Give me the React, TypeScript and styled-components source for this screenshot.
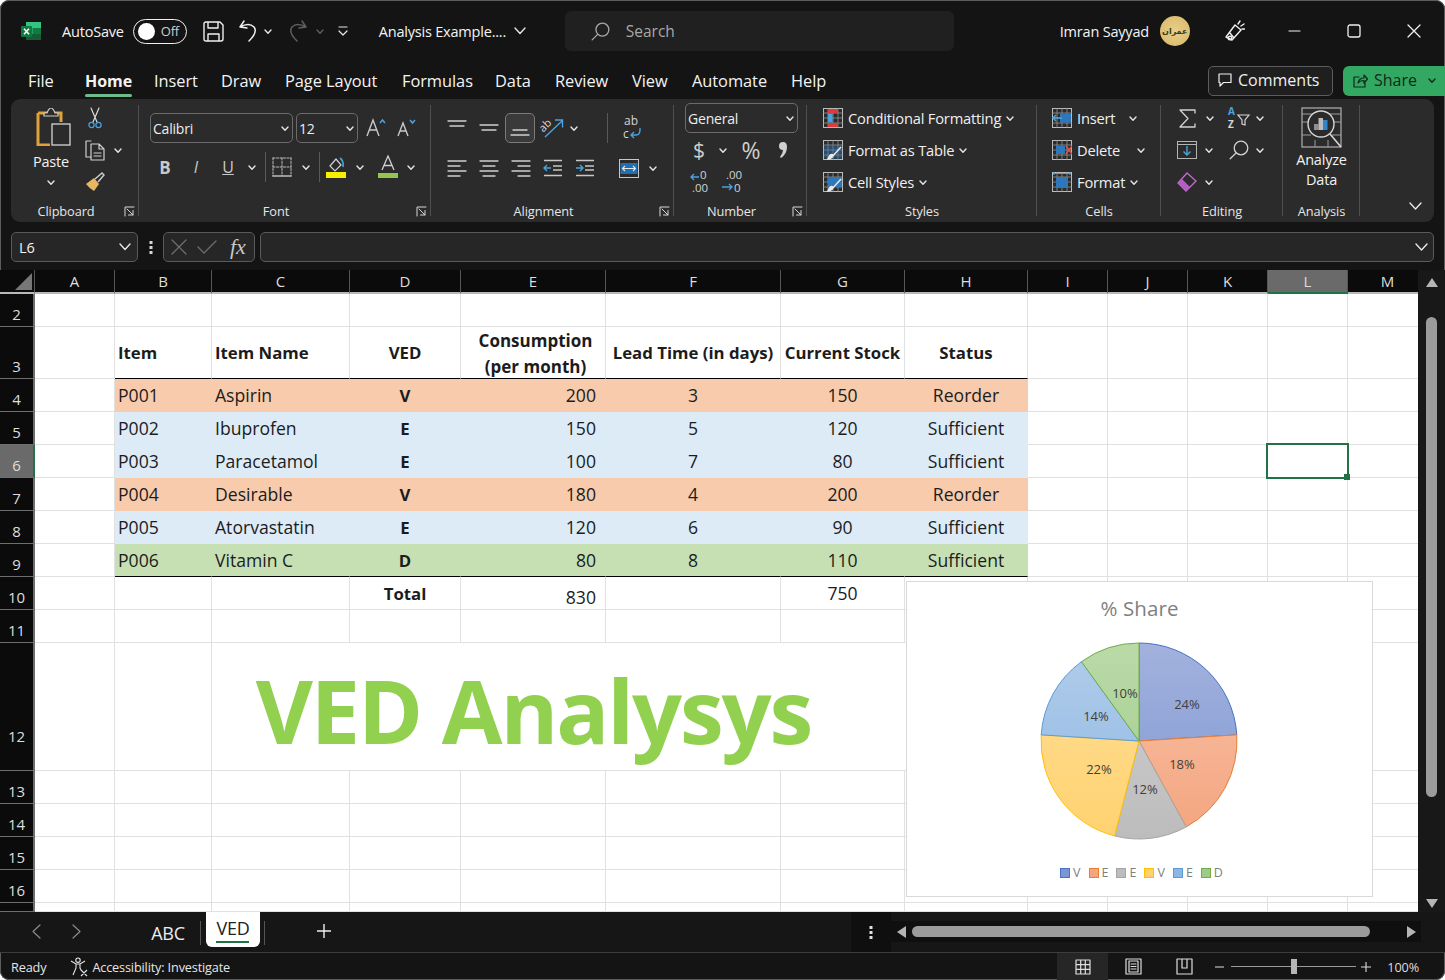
import React from "react";
import styled, { createGlobalStyle } from "styled-components";

const UI = `"Open Sans", "Noto Sans", "Liberation Sans", sans-serif`;

const Global = createGlobalStyle`
  html, body { margin: 0; padding: 0; background: #fff; }
  #root { width: 1445px; height: 980px; }
  * { box-sizing: border-box; }
`;

const Frame = styled.div`
  width: 1445px; height: 980px; background: #141414; color: #f2f2f2;
  font-family: ${UI}; font-size: 14px; display: flex; flex-direction: column;
  border-radius: 9px; overflow: hidden; position: relative;
  box-shadow: inset 0 0 0 1px #5c5c5c;
`;

/* ---------- generic small drawing helpers ---------- */
const Ic: React.FC<{ w: number; h?: number; vb?: string; sw?: number; c?: string; children: React.ReactNode }> = ({ w, h, vb, sw = 1.2, c = "currentColor", children }) => (
  <svg width={w} height={h ?? w} viewBox={vb ?? `0 0 ${w} ${h ?? w}`} fill="none" stroke={c} strokeWidth={sw} strokeLinecap="round" strokeLinejoin="round" style={{ flex: "none", display: "block" }}>
    {children}
  </svg>
);
const Chev: React.FC<{ s?: number; c?: string }> = ({ s = 9, c = "#e6e6e6" }) => (
  <Ic w={s} h={Math.ceil(s * 0.6)} sw={1.4} c={c}><path d={`M1 1 L${s / 2} ${s * 0.55 - 0.2} L${s - 1} 1`} /></Ic>
);

const BLUE = "#4aa3df";
const GR = "#c9c9c9";

/* ---------- title bar ---------- */
const TitleBar = styled.div`
  height: 62px; flex: none; display: flex; align-items: center; padding: 0 0 0 21px; position: relative;
`;
const Spot = styled.div<{ $ml?: number }>`
  margin-left: ${(p) => p.$ml ?? 0}px; display: flex; align-items: center; flex: none;
`;
const TitleText = styled.span<{ $ml?: number; $w?: number }>`
  margin-left: ${(p) => p.$ml ?? 0}px; font-size: 14.5px; white-space: nowrap; letter-spacing: -0.2px; color: #f4f4f4; flex: none;
  ${(p) => (p.$w ? `width:${p.$w}px;` : "")}
`;
const Toggle = styled.div`
  margin-left: 9px; width: 54px; height: 25px; border: 1px solid #f0f0f0; border-radius: 13px; display: flex; align-items: center;
  padding-left: 4px; gap: 6px; font-size: 13px; letter-spacing: -0.2px; color: #cfcfcf; flex: none;
`;
const Knob = styled.span`
  width: 17px; height: 17px; border-radius: 50%; background: #fff; flex: none;
`;
const SearchBox = styled.div`
  margin-left: 39px; width: 389px; height: 40px; background: #202020; border-radius: 6px; display: flex; align-items: center;
  padding-left: 26px; gap: 16px; color: #a8a8a8; font-size: 15.5px; flex: none;
`;
const Avatar = styled.div`
  margin-left: 11px; width: 30px; height: 30px; border-radius: 50%; background: radial-gradient(circle, #e9cf8b, #d8b767);
  color: #33401f; display: flex; align-items: center; justify-content: center; font: 700 8px "DejaVu Sans", sans-serif; flex: none; overflow: hidden;
`;

/* ---------- tab row ---------- */
const TabRow = styled.div`
  height: 37px; flex: none; display: flex; align-items: flex-start; padding-left: 28px; padding-top: 4px;
`;
const Tab = styled.div<{ $on?: boolean; $w: number }>`
  width: ${(p) => p.$w}px; flex: none; height: 30px; font-size: 16.4px; line-height: 30px; position: relative; white-space: nowrap; letter-spacing: -0.05px;
  font-weight: ${(p) => (p.$on ? 700 : 400)}; color: #f3f3f3;
  ${(p) => p.$on && `font-size:16px;&::after{content:"";position:absolute;left:0;width:47px;bottom:-1px;height:3px;border-radius:2px;background:#6dbb8a;}`}
`;
const TabActions = styled.div`
  margin-left: auto; display: flex; gap: 10px; align-items: center;
`;
const CommentsBtn = styled.div`
  width: 125px; height: 30px; border: 1px solid #5c5c5c; border-radius: 5px; display: flex; align-items: center; padding: 0 0 2px 9px; gap: 6px;
  font-size: 16px; background: #1f1f1f; color: #f0f0f0;
`;
const ShareBtn = styled.div`
  width: 102px; height: 30px; border-radius: 6px 0 0 6px; background: #33a862; color: #10291a; display: flex; align-items: center; padding: 0 0 2px 10px; gap: 6px; font-size: 16px;
`;

/* ---------- ribbon ---------- */
const Ribbon = styled.div`
  flex: none; margin: 0 11px; height: 123px; background: #2b2b2b; border-radius: 9px; display: flex; position: relative;
`;
const Group = styled.div<{ $w: number; $sep?: boolean }>`
  width: ${(p) => p.$w}px; flex: none; position: relative; display: flex; flex-direction: column; height: 100%;
  ${(p) => p.$sep !== false && `&::after{content:"";position:absolute;right:0;top:6px;bottom:6px;width:1px;background:#4f4f4f;}`}
`;
const GroupBody = styled.div<{ $pt?: number; $pl?: number; $gap?: number; $row?: boolean }>`
  flex: 1; min-height: 0; display: flex; flex-direction: ${(p) => (p.$row ? "row" : "column")}; padding-top: ${(p) => p.$pt ?? 0}px;
  padding-left: ${(p) => p.$pl ?? 0}px; gap: ${(p) => p.$gap ?? 0}px;
`;
const GroupFoot = styled.div`
  height: 24px; flex: none; display: flex; align-items: center; padding-top: 2px; font-size: 12.8px; letter-spacing: -0.1px; color: #e6e6e6;
`;
const FootLabel = styled.span`
  flex: 1; text-align: center;
`;
const Launcher = styled.span`
  width: 18px; flex: none; display: flex; justify-content: flex-end; padding-right: 4px;
`;
const BtnRow = styled.div<{ $h: number }>`
  height: ${(p) => p.$h}px; flex: none; display: flex; align-items: center;
`;
const Slot = styled.div<{ $w: number; $on?: boolean; $ml?: number }>`
  width: ${(p) => p.$w}px; height: 30px; flex: none; display: flex; align-items: center; justify-content: center;
  margin-left: ${(p) => p.$ml ?? 0}px;
  ${(p) => p.$on && `border:1px solid #7a7a7a;border-radius:5px;background:#3a3a3a;`}
`;
const VBar = styled.div<{ $w?: number }>`
  width: 1px; height: 30px; background: #5a5a5a; flex: none; margin: 0 ${(p) => p.$w ?? 0}px;
`;
const Combo = styled.div<{ $w: number; $ml?: number }>`
  width: ${(p) => p.$w}px; margin-left: ${(p) => p.$ml ?? 0}px; height: 30px; border: 1px solid #6b6b6b; border-radius: 5px; display: flex; align-items: center;
  justify-content: space-between; padding: 0 3px 0 2px; font-size: 14px; letter-spacing: -0.2px; color: #ededed; flex: none;
`;
const ListBtn = styled.div<{ $w?: number }>`
  display: flex; align-items: center; gap: 5px; font-size: 14.7px; letter-spacing: -0.2px; white-space: nowrap; color: #efefef;
  ${(p) => (p.$w ? `width:${p.$w}px;` : "")}
`;
const Push = styled.span`
  margin-left: auto; display: flex;
`;
const PasteCol = styled.div`
  width: 80px; flex: none; display: flex; flex-direction: column; align-items: center; padding-top: 9px; font-size: 14.5px;
`;
const PasteArt = styled.div`
  margin-left: 6px; flex: none;
`;
const PasteLabel = styled.span`
  margin-top: 6px; line-height: 20px; letter-spacing: -0.2px;
`;
const PasteChev = styled.span`
  margin-top: 8px; display: flex;
`;
const ClipCol = styled.div`
  display: flex; flex-direction: column; padding-top: 3px; margin-left: -6px;
`;
const ClipRow = styled.div`
  height: 32px; width: 48px; display: flex; align-items: center; gap: 9px;
`;
const ClipIcon = styled.div`
  width: 20px; flex: none; display: flex; justify-content: center;
`;
const AnalyzeCol = styled.div`
  flex: 1; display: flex; flex-direction: column; align-items: center; padding-top: 8px; font-size: 14.5px; line-height: 20px; letter-spacing: -0.2px; text-align: center;
`;
const AnalyzeText = styled.div`
  margin-top: 2px;
`;
const Collapse = styled.div`
  position: absolute; right: 12px; bottom: 12px; display: flex;
`;
const Glyph = styled.span<{ $s: number; $b?: boolean; $i?: boolean; $u?: boolean; $c?: string }>`
  font-size: ${(p) => p.$s}px; font-weight: ${(p) => (p.$b ? 700 : 400)}; font-style: ${(p) => (p.$i ? "italic" : "normal")};
  ${(p) => p.$u && "text-decoration: underline;"} color: ${(p) => p.$c ?? "#c9c9c9"}; line-height: 1; font-family: ${UI};
`;

/* ---------- formula bar ---------- */
const FormulaBar = styled.div`
  height: 48px; flex: none; display: flex; align-items: flex-start; padding: 10px 11px 0; gap: 0;
`;
const NameBox = styled.div`
  width: 127px; height: 30px; background: #262626; border: 1px solid #5a5a5a; border-radius: 5px; display: flex; align-items: center; justify-content: space-between;
  padding: 0 6px 0 7px; font-size: 14.5px; flex: none;
`;
const Dots = styled.div`
  width: 25px; height: 30px; flex: none; display: flex; align-items: center; justify-content: center;
`;
const FxBox = styled.div`
  width: 92px; height: 30px; border: 1px solid #5a5a5a; border-radius: 5px; background: #262626; display: flex; align-items: center; padding-left: 7px; gap: 10px; flex: none; color: #6e6e6e;
`;
const Fx = styled.span`
  font: italic 400 22px "Liberation Serif", serif; color: #c8c8c8; margin-left: 3px; line-height: 1;
`;
const FormulaInput = styled.div`
  flex: 1; margin-left: 5px; height: 30px; border: 1px solid #5a5a5a; border-radius: 5px; background: #262626; display: flex; align-items: center; justify-content: flex-end; padding-right: 5px;
`;

/* ---------- sheet ---------- */
const SheetWrap = styled.div`
  flex: none; height: 642px; display: flex; background: #181818;
`;
const Sheet = styled.div`
  width: 1418px; height: 642px; flex: none; position: relative; display: grid; overflow: hidden; background: #fff;
  grid-template-columns: 35px 80px 97px 138px 111px 145px 175px 124px 123px 80px 80px 80px 80px 80px;
  grid-template-rows: 24px 33px 52px repeat(8, 33px) 128px repeat(4, 33px) 9px;
  font-size: 17.6px; color: #1c1c1c;
`;
const ColHead = styled.div<{ $sel?: boolean }>`
  background: ${(p) => (p.$sel ? "#6a6a6a" : "#0b0b0b")}; color: #dedede; font-size: 15px; display: flex; align-items: center; justify-content: center;
  border-right: 1px solid #565656; border-bottom: 2px solid ${(p) => (p.$sel ? "#217346" : "#b9b9b9")};
`;
const Corner = styled.div`
  background: #0b0b0b; border-right: 1px solid #565656; border-bottom: 2px solid #b9b9b9; display: flex; align-items: flex-end; justify-content: flex-end; padding: 0 2px 2px 0;
`;
const RowHead = styled.div<{ $sel?: boolean; $lift?: number }>`
  background: ${(p) => (p.$sel ? "#6a6a6a" : "#0b0b0b")}; color: #dedede; font-size: 15px; display: flex; align-items: flex-end; justify-content: center; line-height: 20px;
  padding-bottom: ${(p) => p.$lift ?? 2}px;
  border-bottom: 1px solid #6e6e6e; border-right: 2px solid ${(p) => (p.$sel ? "#217346" : "#6e6e6e")};
`;
const Cell = styled.div<{ $fill?: string; $align?: "l" | "c" | "r"; $bold?: boolean; $under?: boolean; $low?: boolean; $head?: boolean; $span?: number }>`
  background: ${(p) => p.$fill ?? "#fff"}; display: flex; white-space: nowrap; min-width: 0;
  align-items: ${(p) => (p.$low ? "flex-end" : "center")};
  justify-content: ${(p) => (p.$align === "r" ? "flex-end" : p.$align === "c" ? "center" : "flex-start")};
  padding-left: ${(p) => (p.$align === "r" || p.$align === "c" ? 0 : 3)}px;
  padding-right: ${(p) => (p.$align === "r" ? 9 : 0)}px;
  padding-bottom: 0;
  font-weight: ${(p) => (p.$bold ? 700 : 400)};
  ${(p) => p.$bold && "font-size: 16.8px;"}
  border-right: 1px solid ${(p) => p.$fill ?? "#e1e1e1"};
  border-bottom: 1px solid ${(p) => (p.$under ? "#000" : p.$fill ?? "#e1e1e1")};
  ${(p) => p.$span && `grid-column: span ${p.$span};`}
`;
const HeadText = styled.div`
  text-align: center; line-height: 26px; font-weight: 700; font-size: 17px; padding: 2px 0 0 5px;
`;
const BigTitle = styled.div`
  font-weight: 700; font-size: 88px; color: #92d050; padding-right: 172px; letter-spacing: -2.1px; line-height: 1; transform: translateY(3px);
`;
const Selection = styled.div`
  position: absolute; left: 1266px; top: 173px; width: 83px; height: 36px; border: 2px solid #217346; pointer-events: none;
  &::after { content: ""; position: absolute; right: -3px; bottom: -3px; width: 6px; height: 6px; background: #217346; border: 0 solid #fff; }
`;
const Chart = styled.div`
  position: absolute; left: 906px; top: 311px; width: 467px; height: 316px; background: #fff; border: 1px solid #d9d9d9; display: flex; flex-direction: column; align-items: center;
`;
const ChartTitle = styled.div`
  margin-top: 12px; height: 28px; line-height: 28px; font-size: 20.5px; color: #7f7f7f; letter-spacing: .1px;
`;
const PieBox = styled.div`
  margin-top: 19px; width: 200px; height: 200px; flex: none; transform: translateX(-1px);
`;
const Legend = styled.div`
  margin-top: 23px; display: flex; gap: 8px; font-size: 12.5px; color: #7f7f7f; transform: translateX(2px);
`;
const LegendItem = styled.div`
  display: flex; align-items: center; gap: 3px;
`;
const Swatch = styled.span<{ $c: string; $b: string }>`
  width: 10px; height: 10px; background: ${(p) => p.$c}; border: 1px solid ${(p) => p.$b}; flex: none;
`;
const VScroll = styled.div`
  width: 27px; flex: none; position: relative; display: flex; flex-direction: column; align-items: center;
`;
const VThumb = styled.div`
  margin-top: 17px; width: 11px; height: 480px; border-radius: 6px; background: #9b9b9b; flex: none;
`;
const VUp = styled.div`
  height: 30px; padding-top: 8px; flex: none; display: flex;
`;
const VDown = styled.div`
  margin-top: auto; padding-bottom: 4px; display: flex;
`;

/* ---------- sheet tabs ---------- */
const SheetBar = styled.div`
  height: 40px; flex: none; background: #161616; display: flex; align-items: stretch; padding-left: 32px; position: relative;
`;
const NavArrow = styled.div<{ $ml?: number }>`
  margin-left: ${(p) => p.$ml ?? 0}px; display: flex; align-items: center; width: 10px; flex: none; padding-bottom: 2px;
`;
const SheetTab = styled.div`
  margin-left: 56px; width: 60px; text-align: center; font-size: 18px; line-height: 42px; letter-spacing: -0.3px; color: #ececec; flex: none;
`;
const TabSep = styled.div<{ $ml?: number }>`
  width: 1px; height: 24px; margin: 9px 0 0 ${(p) => p.$ml ?? 0}px; background: #555; flex: none;
`;
const ActiveTab = styled.div`
  margin-left: 5px; width: 54px; height: 35px; background: #fff; color: #222; border-radius: 0 0 6px 6px; text-align: center; font-size: 18px; line-height: 32px; letter-spacing: -0.3px; position: relative; flex: none;
  &::after { content: ""; position: absolute; left: 10px; right: 11px; bottom: 4px; height: 2px; background: #1e7145; }
`;
const PlusBtn = styled.div`
  margin-left: 52px; display: flex; align-items: center; flex: none; padding-bottom: 2px;
`;
const Kebab = styled.div`
  margin-left: auto; width: 40px; background: #0f0f0f; display: flex; align-items: center; justify-content: center; flex: none;
`;
const HScroll = styled.div`
  width: 530px; height: 21px; flex: none; background: #0f0f0f; margin: 9px 24px 0 0; display: flex; align-items: center; padding-left: 6px;
`;
const HThumb = styled.div`
  margin-left: 6px; width: 458px; height: 11px; border-radius: 6px; background: #9b9b9b; flex: none;
`;
const HRight = styled.div`
  margin-left: 37px; display: flex;
`;

/* ---------- status bar ---------- */
const StatusBar = styled.div`
  height: 28px; flex: none; border-top: 1px solid #3d3d3d; display: flex; align-items: center; padding-left: 11px; font-size: 12.7px; color: #e6e6e6; letter-spacing: -0.15px; white-space: nowrap;
`;
const StatusA11y = styled.div`
  margin-left: 24px; display: flex; align-items: center; gap: 4px; white-space: nowrap;
`;
const ViewBtn = styled.div<{ $on?: boolean; $auto?: boolean }>`
  width: 51px; height: 27px; flex: none; display: flex; align-items: center; justify-content: center; ${(p) => p.$auto && "margin-left: auto;"}
  background: ${(p) => (p.$on ? "#262626" : "transparent")};
`;
const Zoomer = styled.div`
  display: flex; align-items: center; margin-left: 5px; flex: none; color: #dedede;
`;
const Track = styled.div`
  width: 125px; height: 1px; background: #9a9a9a; margin: 0 5px 0 7px; position: relative;
  &::after { content: ""; position: absolute; left: 60px; top: -7px; width: 6px; height: 15px; background: #b5b5b5; }
`;
const ZoomPct = styled.span`
  width: 32px; margin: 0 26px 0 16px; text-align: right; white-space: nowrap;
`;

/* ---------- icons ---------- */
const ExcelLogo = () => (
  <svg width="20" height="20" viewBox="0 0 20 20" style={{ display: "block", flex: "none" }}>
    <rect x="5" y="1" width="15" height="18" rx="1.5" fill="#21a366" />
    <rect x="5" y="1" width="15" height="6" fill="#33c481" />
    <rect x="12" y="7" width="8" height="6" fill="#107c41" />
    <rect x="5" y="13" width="15" height="6" fill="#185c37" />
    <rect x="0" y="5" width="11" height="11" rx="1" fill="#0f7a40" />
    <path d="M3 7.8 L8 13.2 M8 7.8 L3 13.2" stroke="#fff" strokeWidth="1.6" />
  </svg>
);
const SaveIc = () => (
  <Ic w={21} sw={1.4} c="#f0f0f0"><path d="M1 3 Q1 1 3 1 H17 L20 4 V18 Q20 20 18 20 H3 Q1 20 1 18 Z M5 1 V7 H15 V1 M5 20 V13 H16 V20" /></Ic>
);
const UndoIc = ({ c = "#f0f0f0" }) => (
  <Ic w={20} h={22} sw={1.5} c={c}><path d="M6 1 L2 7 L9 8 M2 7 Q11 2 16 7 Q20 12 11 21" /></Ic>
);
const RedoIc = () => (
  <Ic w={20} h={22} sw={1.5} c="#5f5f5f"><path d="M14 1 L18 7 L11 8 M18 7 Q9 2 4 7 Q0 12 9 21" /></Ic>
);
const QatIc = () => (
  <Ic w={10} h={11} sw={1.2} c="#e6e6e6"><path d="M1 1 H9 M1 5 L5 9 L9 5" /></Ic>
);
const SearchIc = ({ s = 19, c = "#a8a8a8" }) => (
  <Ic w={s} sw={1.3} c={c}><circle cx={s * 0.6} cy={s * 0.4} r={s * 0.34} /><path d={`M${s * 0.35} ${s * 0.65} L${s * 0.06} ${s * 0.94}`} /></Ic>
);
const PenIc = () => (
  <Ic w={20} h={22} sw={1.4} c="#f0f0f0"><path d="M10 5 L16 10 L7 20 L1 17 Z M5 13 L9 18 M13 4 L15 1 M16 6 L19 4 M17 9 L20 9" /><circle cx="5" cy="18" r="1.8" /></Ic>
);
const PasteIc = () => (
  <svg width="36" height="38" viewBox="0 0 36 38" fill="none" style={{ display: "block" }}>
    <path d="M2 5 H25 V14 M2 5 V37 H14" stroke="#dfa23a" strokeWidth="3" />
    <path d="M8 5 H11 Q13 0 15 0 Q17 0 19 5 H22 V8 H8 Z" stroke="#cfcfcf" strokeWidth="1.2" fill="#2b2b2b" />
    <rect x="16" y="16" width="18" height="21" stroke="#d4d4d4" strokeWidth="1.3" fill="#2b2b2b" />
  </svg>
);
const ScissorsIc = () => (
  <Ic w={14} h={22} sw={1.2} c="#dcdcdc"><path d="M3 1 L9 15 M11 1 L5 15" /><circle cx="3.5" cy="18" r="2.6" stroke={BLUE} /><circle cx="10.5" cy="18" r="2.6" stroke={BLUE} /></Ic>
);
const CopyIc = () => (
  <Ic w={20} h={21} sw={1.2} c="#cfcfcf"><path d="M6 1 H1 V17 H6" /><path d="M6 4 H14 L19 9 V20 H6 Z M14 4 V9 H19 M9 13 H16 M9 16 H16" /></Ic>
);
const BrushIc = () => (
  <svg width="20" height="20" viewBox="0 0 20 20" fill="none" style={{ display: "block" }}>
    <path d="M1 12 L9 6 L14 12 L9 19 Q5 17 1 12 Z" fill="#e7b863" />
    <path d="M10 7 L17 1 L19 3 L13 10" stroke="#cfcfcf" strokeWidth="1.4" />
  </svg>
);
const LauncherIc = () => (
  <Ic w={11} h={11} sw={1} c="#d8d8d8"><path d="M1 10 V1 H10 M3 3 L9 9 M9 4.5 V9 H4.5" /></Ic>
);
const GrowA = ({ up }: { up: boolean }) => (
  <svg width="20" height="20" viewBox="0 0 20 20" fill="none" style={{ display: "block" }}>
    <path d={up ? "M1 18 L7 2 L13 18 M3.5 12 H10.5" : "M2 18 L7 5 L12 18 M4 13 H10"} stroke={GR} strokeWidth="1.4" />
    <path d={up ? "M14 5 L16.5 2 L19 5" : "M14 2 L16.5 5 L19 2"} stroke={BLUE} strokeWidth="1.5" />
  </svg>
);
const BordersIc = () => (
  <Ic w={20} h={20} sw={1} c="#bdbdbd"><path d="M1 1 H19 M1 10 H19 M10 1 V19 M1 1 V19 M19 1 V19" strokeDasharray="2 1.5" /><path d="M1 19 H19" strokeWidth="1.6" /></Ic>
);
const FillIc = () => (
  <svg width="20" height="24" viewBox="0 0 20 24" fill="none" style={{ display: "block" }}>
    <path d="M4 11 L10 4 L15 10 L9 16 Z" stroke="#d0d0d0" strokeWidth="1.2" />
    <path d="M14 3 Q18 6 17 12" stroke={BLUE} strokeWidth="1.6" />
    <rect x="0" y="17" width="20" height="6" fill="#f8ee00" />
  </svg>
);
const FontColorIc = () => (
  <svg width="20" height="24" viewBox="0 0 20 24" fill="none" style={{ display: "block" }}>
    <path d="M4 15 L10 1 L16 15 M6 10.5 H14" stroke="#d0d0d0" strokeWidth="1.3" />
    <rect x="0" y="18" width="20" height="5" fill="#92c64f" />
  </svg>
);
const Lines: React.FC<{ rows: [number, number][]; y0: number; dy: number; w?: number; h?: number }> = ({ rows, y0, dy, w = 20, h = 20 }) => (
  <Ic w={w} h={h} sw={1.3} c="#d0d0d0">
    <path d={rows.map(([a, b], i) => `M${a} ${y0 + i * dy} H${b}`).join(" ")} />
  </Ic>
);
const IndentIc = ({ out }: { out: boolean }) => (
  <svg width="20" height="18" viewBox="0 0 20 18" fill="none" style={{ display: "block" }}>
    <path d="M1 1.5 H19 M10 7 H19 M10 11 H19 M1 16.5 H19" stroke="#c8c8c8" strokeWidth="1.3" />
    <path d={out ? "M8 9 H1 M4 6 L1 9 L4 12" : "M1 9 H8 M5 6 L8 9 L5 12"} stroke={BLUE} strokeWidth="1.4" />
  </svg>
);
const OrientIc = () => (
  <svg width="22" height="20" viewBox="0 0 22 20" fill="none" style={{ display: "block", overflow: "visible" }}>
    <path d="M3 19 L20 3 M13 2 H20.5 V9.5" stroke={BLUE} strokeWidth="1.4" />
    <text x="-2" y="11" fontSize="11" fill="#d6d6d6" transform="rotate(-45 4 9)" fontFamily="Open Sans">ab</text>
  </svg>
);
const WrapIc = () => (
  <svg width="20" height="24" viewBox="0 0 20 24" fill="none" style={{ display: "block", overflow: "visible" }}>
    <text x="3" y="9" fontSize="12" fill="#d4d4d4" fontFamily="Open Sans">ab</text>
    <text x="2" y="22" fontSize="12" fill="#d4d4d4" fontFamily="Open Sans">c</text>
    <path d="M19 12 V14 Q19 19 15 19 H10 M13 16 L10 19 L13 22" stroke={BLUE} strokeWidth="1.4" />
  </svg>
);
const MergeIc = () => (
  <svg width="20" height="19" viewBox="0 0 20 19" fill="none" style={{ display: "block" }}>
    <rect x="0.5" y="0.5" width="19" height="18" stroke="#c8c8c8" />
    <rect x="1.5" y="4" width="17" height="11" fill="#1f6fb5" />
    <path d="M4 9.5 H16 M6 7 L3.5 9.5 L6 12 M14 7 L16.5 9.5 L14 12" stroke="#e6e6e6" strokeWidth="1.1" />
  </svg>
);
const DecIc = ({ inc }: { inc: boolean }) => (
  <svg width="20" height="22" viewBox="0 0 20 22" fill="none" style={{ display: "block", overflow: "visible" }}>
    <text x={inc ? 4 : 10} y="8" fontSize="11.5" fill="#d4d4d4" fontFamily="Open Sans">{inc ? ".00" : "0"}</text>
    <text x={inc ? 12 : 2} y="21" fontSize="11.5" fill="#d4d4d4" fontFamily="Open Sans">{inc ? "0" : ".00"}</text>
    <path d={inc ? "M0 16 H10 M7 13 L10 16 L7 19" : "M1 6 H9 M4 3 L1 6 L4 9"} stroke={BLUE} strokeWidth="1.3" />
  </svg>
);
const CommaIc = () => (
  <svg width="10" height="16" viewBox="0 0 10 16" style={{ display: "block" }}>
    <path d="M1 4 Q1 0 5 0 Q9 0 9 5 Q9 12 3 16 L2 15 Q5 11 5 8 Q1 8 1 4 Z" fill="#cfcfcf" />
  </svg>
);
const TableBase: React.FC<{ children?: React.ReactNode }> = ({ children }) => (
  <svg width="20" height="20" viewBox="0 0 20 20" fill="none" style={{ display: "block", flex: "none" }}>
    <rect x="0.5" y="0.5" width="19" height="19" stroke="#bdbdbd" />
    <path d="M0.5 5 H19.5 M0.5 10 H19.5 M0.5 15 H19.5 M5 0.5 V19.5 M10 0.5 V19.5 M15 0.5 V19.5" stroke="#8a8a8a" strokeWidth=".9" />
    {children}
  </svg>
);
const CondIc = () => <TableBase><rect x="5" y="1" width="10" height="4" fill="#e03b3b" /><rect x="5" y="5.5" width="4.6" height="9" fill="#4aa3df" /><rect x="5" y="15" width="10" height="4" fill="#e03b3b" /></TableBase>;
const BrushMini = () => <path d="M8 18 L18 7 M5 19 Q7 13 10 15 Q10 18 5 19 Z" stroke="#e9e9e9" strokeWidth="1.5" fill="#e9e9e9" />;
const FmtTableIc = () => <TableBase><rect x="1" y="5.5" width="18" height="13" fill="#2d77bb" opacity=".45" /><BrushMini /></TableBase>;
const CellStyleIc = () => <TableBase><rect x="5" y="5" width="14" height="10" fill="#2d77bb" /><BrushMini /></TableBase>;
const InsertIc = () => <TableBase><rect x="8" y="5.5" width="11" height="9" fill="#2d77bb" /><path d="M10 10 H1 M4 7 L1 10 L4 13" stroke={BLUE} strokeWidth="1.5" /></TableBase>;
const DeleteIc = () => <TableBase><rect x="4" y="6" width="9" height="8" fill="#2d77bb" /><path d="M14 6 L20 14 M20 6 L14 14" stroke="#e5534b" strokeWidth="1.5" /></TableBase>;
const FormatIc = () => <TableBase><rect x="4" y="5" width="12" height="11" fill="#2d77bb" /><path d="M1 1.5 H19 M2 0 V3 M18 0 V3" stroke={BLUE} strokeWidth="1.1" /></TableBase>;
const SigmaIc = () => <Ic w={17} h={19} sw={1.3} c="#d2d2d2"><path d="M16 4 V1 H1 L9 9.5 L1 18 H16 V15" /></Ic>;
const SortIc = () => (
  <svg width="22" height="20" viewBox="0 0 22 20" fill="none" style={{ display: "block", overflow: "visible" }}>
    <text x="0" y="7" fontSize="10" fontWeight="700" fill={BLUE} fontFamily="Open Sans">A</text>
    <text x="0" y="20" fontSize="10" fontWeight="700" fill="#d6d6d6" fontFamily="Open Sans">Z</text>
    <path d="M10 7 H21 L17 12 V17 L14 16 V12 Z" stroke="#d6d6d6" strokeWidth="1.2" />
  </svg>
);
const FillDownIc = () => (
  <svg width="20" height="18" viewBox="0 0 20 18" fill="none" style={{ display: "block" }}>
    <rect x="0.5" y="0.5" width="19" height="17" stroke="#b5b5b5" />
    <path d="M0.5 3.5 H19.5" stroke="#b5b5b5" />
    <path d="M10 5 V14 M6.5 10.5 L10 14 L13.5 10.5" stroke={BLUE} strokeWidth="1.4" />
  </svg>
);
const EraserIc = () => (
  <svg width="20" height="20" viewBox="0 0 20 20" fill="none" style={{ display: "block" }}>
    <path d="M10 1 L19 9 L9 19 L1 11 Z" stroke="#c46cd0" strokeWidth="1.3" />
    <path d="M5 7 L13 15 L9 19 L1 11 Z" fill="#b45ec4" />
  </svg>
);
const AnalyzeIc = () => (
  <svg width="41" height="41" viewBox="0 0 41 41" fill="none" style={{ display: "block" }}>
    <rect x="1" y="1" width="39" height="39" stroke="#b0b0b0" strokeWidth="1.2" />
    <path d="M1 7 H40 M1 15 H8 M33 15 H40 M1 28 H10 M31 28 H40 M14 33 V40 M27 33 V40" stroke="#9d9d9d" />
    <circle cx="20" cy="17" r="13" fill="#2b2b2b" stroke="#d6d6d6" strokeWidth="1.4" />
    <rect x="13" y="17" width="4.5" height="6" fill="#8f8f8f" />
    <rect x="17.5" y="11" width="4.5" height="12" fill="#bcbcbc" />
    <rect x="22" y="13" width="4.5" height="10" fill="#2f86cf" />
    <path d="M29 27 L40 40" stroke="#d6d6d6" strokeWidth="1.6" />
  </svg>
);
const CommentIc = () => <Ic w={14} h={14} sw={1.2} c="#f0f0f0"><path d="M1 1 H13 V9.5 H5.5 L2 13 V9.5 H1 Z" /></Ic>;
const ShareIc = () => (
  <Ic w={15} h={15} sw={1.2} c="#10291a"><path d="M6 4 H1 V14 H12 V10 M5 10 Q6 5 11 5 V2 L14.5 6 L11 10 V7.5 Q7 7.5 5 10 Z" /></Ic>
);
const A11yIc = () => (
  <svg width="18" height="20" viewBox="0 0 18 20" fill="none" stroke="#e6e6e6" strokeWidth="1.1" style={{ display: "block", flex: "none" }}>
    <circle cx="8" cy="3.2" r="2.2" />
    <path d="M1 4 L6 7 H10 L15 4 M6 7 V11 L3 18 M10 7 V11 L11 13 M11 13 L17 19 M17 13 L11 19" />
  </svg>
);

/* ---------- data ---------- */
const COLS = ["A", "B", "C", "D", "E", "F", "G", "H", "I", "J", "K", "L", "M"];
const ORANGE = "#f8cbad", SKY = "#ddebf7", LEAF = "#c6e0b4";
const ROWS = [
  { id: "P001", name: "Aspirin", ved: "V", cons: 200, lead: 3, stock: 150, status: "Reorder", fill: ORANGE },
  { id: "P002", name: "Ibuprofen", ved: "E", cons: 150, lead: 5, stock: 120, status: "Sufficient", fill: SKY },
  { id: "P003", name: "Paracetamol", ved: "E", cons: 100, lead: 7, stock: 80, status: "Sufficient", fill: SKY },
  { id: "P004", name: "Desirable", ved: "V", cons: 180, lead: 4, stock: 200, status: "Reorder", fill: ORANGE },
  { id: "P005", name: "Atorvastatin", ved: "E", cons: 120, lead: 6, stock: 90, status: "Sufficient", fill: SKY },
  { id: "P006", name: "Vitamin C", ved: "D", cons: 80, lead: 8, stock: 110, status: "Sufficient", fill: LEAF },
];
const Blanks: React.FC<{ n: number }> = ({ n }) => <>{Array.from({ length: n }, (_, i) => <Cell key={i} />)}</>;

const SLICES = [
  { pct: 24, top: "#a3b2de", bot: "#7d96d2", line: "#4472c4", key: "V", lx: 148, ly: 65 },
  { pct: 18, top: "#f7c3a9", bot: "#f4a47e", line: "#ed7d31", key: "E", lx: 143, ly: 125 },
  { pct: 12, top: "#d2d2d2", bot: "#bcbcbc", line: "#a5a5a5", key: "E", lx: 106, ly: 150 },
  { pct: 22, top: "#ffdf9b", bot: "#ffd26f", line: "#ffc000", key: "V", lx: 60, ly: 130 },
  { pct: 14, top: "#b2cdea", bot: "#8db7e3", line: "#5b9bd5", key: "E", lx: 57, ly: 77 },
  { pct: 10, top: "#bbdaa9", bot: "#9fcb88", line: "#70ad47", key: "D", lx: 86, ly: 54 },
];
const Pie = () => {
  const R = 98, C = 100;
  let acc = 0;
  const pts = (a: number) => [C + R * Math.sin(a), C - R * Math.cos(a)];
  return (
    <svg width="200" height="200" viewBox="0 0 200 200" style={{ display: "block" }}>
      <defs>
        {SLICES.map((s, i) => (
          <linearGradient key={i} id={`sl${i}`} gradientUnits="userSpaceOnUse" x1="0" y1="0" x2="0" y2="200">
            <stop offset="0" stopColor={s.top} /><stop offset="1" stopColor={s.bot} />
          </linearGradient>
        ))}
      </defs>
      {SLICES.map((s, i) => {
        const a0 = (acc / 100) * 2 * Math.PI;
        acc += s.pct;
        const a1 = (acc / 100) * 2 * Math.PI;
        const [x0, y0] = pts(a0), [x1, y1] = pts(a1);
        return <path key={i} d={`M${C} ${C} L${x0} ${y0} A${R} ${R} 0 ${s.pct > 50 ? 1 : 0} 1 ${x1} ${y1} Z`} fill={`url(#sl${i})`} stroke={s.line} strokeWidth="1" strokeLinejoin="round" />;
      })}
      {SLICES.map((s, i) => (
        <text key={i} x={s.lx} y={s.ly} textAnchor="middle" dominantBaseline="middle" fontSize="13" fill="#404040" fontFamily="Open Sans">{s.pct}%</text>
      ))}
    </svg>
  );
};

export default function App() {
  const TABS: [string, number][] = [["File", 57], ["Home", 69], ["Insert", 67], ["Draw", 64], ["Page Layout", 117], ["Formulas", 93], ["Data", 60], ["Review", 77], ["View", 60], ["Automate", 99], ["Help", 60]];
  return (
    <Frame>
      <Global />
      <TitleBar>
        <ExcelLogo />
        <TitleText $ml={21}>AutoSave</TitleText>
        <Toggle><Knob />Off</Toggle>
        <Spot $ml={16}><SaveIc /></Spot>
        <Spot $ml={14}><UndoIc /></Spot>
        <Spot $ml={6}><Chev s={8} /></Spot>
        <Spot $ml={16}><RedoIc /></Spot>
        <Spot $ml={8}><Chev s={8} c="#5f5f5f" /></Spot>
        <Spot $ml={14}><QatIc /></Spot>
        <TitleText $ml={31} $w={128}>Analysis Example....</TitleText>
        <Spot $ml={7}><Chev s={12} /></Spot>
        <SearchBox><SearchIc />Search</SearchBox>
        <TitleText $ml={106} $w={89}>Imran Sayyad</TitleText>
        <Avatar>عمران</Avatar>
        <Spot $ml={35}><PenIc /></Spot>
        <Spot $ml={43}><Ic w={13} h={2} sw={1.2} c="#f0f0f0"><path d="M1 1 H12" /></Ic></Spot>
        <Spot $ml={46}><Ic w={14} sw={1.3} c="#f0f0f0"><rect x="1" y="1" width="12" height="12" rx="2" /></Ic></Spot>
        <Spot $ml={46}><Ic w={14} sw={1.3} c="#f0f0f0"><path d="M1 1 L13 13 M13 1 L1 13" /></Ic></Spot>
      </TitleBar>

      <TabRow>
        {TABS.map(([t, w]) => <Tab key={t} $w={w} $on={t === "Home"}>{t}</Tab>)}
        <TabActions>
          <CommentsBtn><CommentIc />Comments</CommentsBtn>
          <ShareBtn><ShareIc />Share<Push><Spot $ml={0}><span style={{ width: 17, display: "block" }}><Chev s={8} c="#10291a" /></span></Spot></Push></ShareBtn>
        </TabActions>
      </TabRow>

      <Ribbon>
        <Group $w={128}>
          <GroupBody $row>
            <PasteCol>
              <PasteArt><PasteIc /></PasteArt>
              <PasteLabel>Paste</PasteLabel>
              <PasteChev><Chev s={8} /></PasteChev>
            </PasteCol>
            <ClipCol>
              <ClipRow><ClipIcon><ScissorsIc /></ClipIcon></ClipRow>
              <ClipRow><ClipIcon><CopyIc /></ClipIcon><Chev s={8} /></ClipRow>
              <ClipRow><ClipIcon><BrushIc /></ClipIcon></ClipRow>
            </ClipCol>
          </GroupBody>
          <GroupFoot><FootLabel>Clipboard</FootLabel><Launcher><LauncherIc /></Launcher></GroupFoot>
        </Group>

        <Group $w={292}>
          <GroupBody $pt={14} $gap={9} $pl={11}>
            <BtnRow $h={30}>
              <Combo $w={143}>Calibri<Chev s={8} /></Combo>
              <Combo $w={62} $ml={3}>12<Chev s={8} /></Combo>
              <Slot $w={32} $ml={2}><GrowA up /></Slot>
              <Slot $w={28}><GrowA up={false} /></Slot>
            </BtnRow>
            <BtnRow $h={30}>
              <Slot $w={30}><Glyph $s={17} $b>B</Glyph></Slot>
              <Slot $w={32}><Glyph $s={16} $i>I</Glyph></Slot>
              <Slot $w={32}><Glyph $s={16} $u>U</Glyph></Slot>
              <Slot $w={16}><Chev s={8} /></Slot>
              <VBar $w={5} />
              <Slot $w={22}><BordersIc /></Slot>
              <Slot $w={26}><Chev s={8} /></Slot>
              <VBar />
              <Slot $w={32}><FillIc /></Slot>
              <Slot $w={16}><Chev s={8} /></Slot>
              <Slot $w={30} $ml={5}><FontColorIc /></Slot>
              <Slot $w={16}><Chev s={8} /></Slot>
            </BtnRow>
          </GroupBody>
          <GroupFoot><FootLabel>Font</FootLabel><Launcher><LauncherIc /></Launcher></GroupFoot>
        </Group>

        <Group $w={243}>
          <GroupBody $pt={14} $gap={10} $pl={10}>
            <BtnRow $h={30}>
              <Slot $w={32}><Lines rows={[[1, 19], [3, 17]]} y0={3} dy={5} /></Slot>
              <Slot $w={32}><Lines rows={[[1, 19], [3, 17]]} y0={7} dy={5} /></Slot>
              <Slot $w={30} $on><Lines rows={[[3, 17], [1, 19]]} y0={12} dy={5} /></Slot>
              <Slot $w={36}><OrientIc /></Slot>
              <Slot $w={6}><Chev s={8} /></Slot>
              <Slot $w={30} />
              <VBar />
              <Slot $w={46}><WrapIc /></Slot>
            </BtnRow>
            <BtnRow $h={30}>
              <Slot $w={32}><Lines rows={[[1, 19], [1, 13], [1, 19], [1, 13]]} y0={3} dy={5} /></Slot>
              <Slot $w={32}><Lines rows={[[1, 19], [4, 16], [1, 19], [4, 16]]} y0={3} dy={5} /></Slot>
              <Slot $w={32}><Lines rows={[[1, 19], [7, 19], [1, 19], [7, 19]]} y0={3} dy={5} /></Slot>
              <Slot $w={32}><IndentIc out /></Slot>
              <Slot $w={32}><IndentIc out={false} /></Slot>
              <Slot $w={12} />
              <Slot $w={32}><MergeIc /></Slot>
              <Slot $w={16}><Chev s={8} /></Slot>
            </BtnRow>
          </GroupBody>
          <GroupFoot><FootLabel>Alignment</FootLabel><Launcher><LauncherIc /></Launcher></GroupFoot>
        </Group>

        <Group $w={133}>
          <GroupBody $pt={4} $gap={2} $pl={11}>
            <BtnRow $h={30}><Combo $w={113}>General<Chev s={8} /></Combo></BtnRow>
            <BtnRow $h={30}>
              <Slot $w={28}><Glyph $s={21} $c="#cfcfcf">$</Glyph></Slot>
              <Slot $w={20}><Chev s={8} /></Slot>
              <Slot $w={36}><Glyph $s={23} $c="#cfcfcf">%</Glyph></Slot>
              <Slot $w={28}><CommaIc /></Slot>
            </BtnRow>
            <BtnRow $h={30}>
              <Slot $w={30}><DecIc inc={false} /></Slot>
              <Slot $w={34}><DecIc inc /></Slot>
            </BtnRow>
          </GroupBody>
          <GroupFoot><FootLabel>Number</FootLabel><Launcher><LauncherIc /></Launcher></GroupFoot>
        </Group>

        <Group $w={230}>
          <GroupBody $pt={3} $pl={16}>
            <BtnRow $h={32}><ListBtn><CondIc />Conditional Formatting<Chev s={8} /></ListBtn></BtnRow>
            <BtnRow $h={32}><ListBtn><FmtTableIc />Format as Table<Chev s={8} /></ListBtn></BtnRow>
            <BtnRow $h={32}><ListBtn><CellStyleIc />Cell Styles<Chev s={8} /></ListBtn></BtnRow>
          </GroupBody>
          <GroupFoot><FootLabel>Styles</FootLabel></GroupFoot>
        </Group>

        <Group $w={124}>
          <GroupBody $pt={3} $pl={15}>
            <BtnRow $h={32}><ListBtn $w={85}><InsertIc />Insert<Push><Chev s={8} /></Push></ListBtn></BtnRow>
            <BtnRow $h={32}><ListBtn $w={93}><DeleteIc />Delete<Push><Chev s={8} /></Push></ListBtn></BtnRow>
            <BtnRow $h={32}><ListBtn $w={85}><FormatIc />Format<Push><Chev s={8} /></Push></ListBtn></BtnRow>
          </GroupBody>
          <GroupFoot><FootLabel>Cells</FootLabel></GroupFoot>
        </Group>

        <Group $w={122}>
          <GroupBody $pt={3} $pl={13}>
            <BtnRow $h={32}><Slot $w={26}><SigmaIc /></Slot><Slot $w={20}><Chev s={8} /></Slot><Slot $w={30} $ml={4}><SortIc /></Slot><Slot $w={12}><Chev s={8} /></Slot></BtnRow>
            <BtnRow $h={32}><Slot $w={26}><FillDownIc /></Slot><Slot $w={18}><Chev s={8} /></Slot><Slot $w={30} $ml={6}><SearchIc s={20} c="#d2d2d2" /></Slot><Slot $w={12}><Chev s={8} /></Slot></BtnRow>
            <BtnRow $h={32}><Slot $w={26}><EraserIc /></Slot><Slot $w={18}><Chev s={8} /></Slot></BtnRow>
          </GroupBody>
          <GroupFoot><FootLabel>Editing</FootLabel></GroupFoot>
        </Group>

        <Group $w={77}>
          <GroupBody $row>
            <AnalyzeCol><AnalyzeIc /><AnalyzeText>Analyze<br />Data</AnalyzeText></AnalyzeCol>
          </GroupBody>
          <GroupFoot><FootLabel>Analysis</FootLabel></GroupFoot>
        </Group>
        <Collapse><Chev s={13} /></Collapse>
      </Ribbon>

      <FormulaBar>
        <NameBox>L6<Chev s={12} /></NameBox>
        <Dots><Ic w={4} h={14} sw={0}><rect x="0.5" y="1" width="3" height="3" fill="#d6d6d6" /><rect x="0.5" y="6" width="3" height="3" fill="#d6d6d6" /><rect x="0.5" y="11" width="3" height="3" fill="#d6d6d6" /></Ic></Dots>
        <FxBox>
          <Ic w={16} sw={1.3}><path d="M1 1 L15 15 M15 1 L1 15" /></Ic>
          <Ic w={20} h={14} sw={1.3}><path d="M1 7 L7 13 L19 1" /></Ic>
          <Fx>fx</Fx>
        </FxBox>
        <FormulaInput><Chev s={13} /></FormulaInput>
      </FormulaBar>

      <SheetWrap>
        <Sheet>
          <Corner><Ic w={17} sw={0}><path d="M17 0 V17 H0 Z" fill="#777" /></Ic></Corner>
          {COLS.map((c) => <ColHead key={c} $sel={c === "L"}>{c}</ColHead>)}

          <RowHead>2</RowHead><Blanks n={13} />

          <RowHead>3</RowHead>
          <Cell />
          <Cell $bold $under $head>Item</Cell>
          <Cell $bold $under $head>Item Name</Cell>
          <Cell $bold $under $head $align="c">VED</Cell>
          <Cell $under $head $align="c"><HeadText>Consumption<br />(per month)</HeadText></Cell>
          <Cell $bold $under $head $align="c">Lead Time (in days)</Cell>
          <Cell $bold $under $head $align="c">Current Stock</Cell>
          <Cell $bold $under $head $align="c">Status</Cell>
          <Blanks n={5} />

          {ROWS.map((r, i) => (
            <React.Fragment key={r.id}>
              <RowHead $sel={i === 2}>{i + 4}</RowHead>
              <Cell />
              <Cell $fill={r.fill} $under={i === 5}>{r.id}</Cell>
              <Cell $fill={r.fill} $under={i === 5}>{r.name}</Cell>
              <Cell $fill={r.fill} $under={i === 5} $align="c" $bold>{r.ved}</Cell>
              <Cell $fill={r.fill} $under={i === 5} $align="r">{r.cons}</Cell>
              <Cell $fill={r.fill} $under={i === 5} $align="c">{r.lead}</Cell>
              <Cell $fill={r.fill} $under={i === 5} $align="c">{r.stock}</Cell>
              <Cell $fill={r.fill} $under={i === 5} $align="c">{r.status}</Cell>
              <Blanks n={5} />
            </React.Fragment>
          ))}

          <RowHead>10</RowHead>
          <Blanks n={3} />
          <Cell $bold $align="c">Total</Cell>
          <Cell $align="r" $low>830</Cell>
          <Cell />
          <Cell $align="c">750</Cell>
          <Blanks n={6} />

          <RowHead>11</RowHead><Blanks n={13} />

          <RowHead $lift={24}>12</RowHead>
          <Blanks n={2} />
          <Cell $span={6} $align="c"><BigTitle>VED Analysys</BigTitle></Cell>
          <Blanks n={5} />

          {[13, 14, 15, 16].map((n) => (
            <React.Fragment key={n}><RowHead>{n}</RowHead><Blanks n={13} /></React.Fragment>
          ))}
          <RowHead /><Blanks n={13} />

          <Selection />
          <Chart>
            <ChartTitle>% Share</ChartTitle>
            <PieBox><Pie /></PieBox>
            <Legend>
              {SLICES.map((s, i) => (
                <LegendItem key={i}><Swatch $c={s.bot} $b={s.line} />{s.key}</LegendItem>
              ))}
            </Legend>
          </Chart>
        </Sheet>
        <VScroll>
          <VUp><Ic w={12} h={9} sw={0}><path d="M6 0 L12 9 H0 Z" fill="#b5b5b5" /></Ic></VUp>
          <VThumb />
          <VDown><Ic w={12} h={9} sw={0}><path d="M0 0 H12 L6 9 Z" fill="#b5b5b5" /></Ic></VDown>
        </VScroll>
      </SheetWrap>

      <SheetBar>
        <NavArrow><Ic w={9} h={15} sw={1.2} c="#8a8a8a"><path d="M8 1 L1 7.5 L8 14" /></Ic></NavArrow>
        <NavArrow $ml={30}><Ic w={9} h={15} sw={1.2} c="#8a8a8a"><path d="M1 1 L8 7.5 L1 14" /></Ic></NavArrow>
        <SheetTab>ABC</SheetTab>
        <TabSep $ml={2} />
        <ActiveTab>VED</ActiveTab>
        <TabSep $ml={4} />
        <PlusBtn><Ic w={14} sw={1.4} c="#f0f0f0"><path d="M7 0 V14 M0 7 H14" /></Ic></PlusBtn>
        <Kebab><Ic w={4} h={14} sw={0}><rect x="0.5" y="1" width="3" height="3" fill="#e0e0e0" /><rect x="0.5" y="6" width="3" height="3" fill="#e0e0e0" /><rect x="0.5" y="11" width="3" height="3" fill="#e0e0e0" /></Ic></Kebab>
        <HScroll>
          <Ic w={9} h={12} sw={0}><path d="M9 0 V12 L0 6 Z" fill="#b5b5b5" /></Ic>
          <HThumb />
          <HRight><Ic w={9} h={12} sw={0}><path d="M0 0 L9 6 L0 12 Z" fill="#b5b5b5" /></Ic></HRight>
        </HScroll>
      </SheetBar>

      <StatusBar>
        Ready
        <StatusA11y><A11yIc />Accessibility: Investigate</StatusA11y>
        <ViewBtn $on $auto><Ic w={16} sw={1.2} c="#dedede"><path d="M1 1 H15 V15 H1 Z M1 5.7 H15 M1 10.3 H15 M5.7 1 V15 M10.3 1 V15" /></Ic></ViewBtn>
        <ViewBtn><Ic w={17} sw={1.2} c="#dedede"><path d="M1 1 H16 V16 H1 Z M4 3 H13 V14 H4 Z M6 6 H11 M6 8.5 H11 M6 11 H11" /></Ic></ViewBtn>
        <ViewBtn><Ic w={17} sw={1.2} c="#dedede"><path d="M1 1 H16 V16 H1 Z M6 1 V10 H11 V1" /></Ic></ViewBtn>
        <Zoomer>
          <Ic w={9} h={2} sw={1.2}><path d="M0 1 H9" /></Ic>
          <Track />
          <Ic w={10} sw={1.1}><path d="M5 0 V10 M0 5 H10" /></Ic>
          <ZoomPct>100%</ZoomPct>
        </Zoomer>
      </StatusBar>
    </Frame>
  );
}
